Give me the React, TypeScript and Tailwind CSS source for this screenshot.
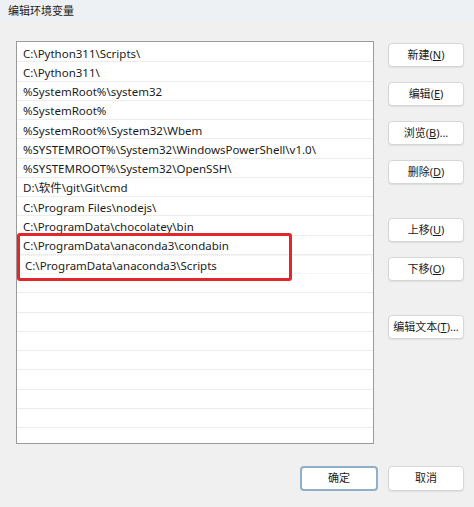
import React from "react";

const rows = [
  "C:\\Python311\\Scripts\\",
  "C:\\Python311\\",
  "%SystemRoot%\\system32",
  "%SystemRoot%",
  "%SystemRoot%\\System32\\Wbem",
  "%SYSTEMROOT%\\System32\\WindowsPowerShell\\v1.0\\",
  "%SYSTEMROOT%\\System32\\OpenSSH\\",
  "D:\\软件\\git\\Git\\cmd",
  "C:\\Program Files\\nodejs\\",
  "C:\\ProgramData\\chocolatey\\bin",
  "C:\\ProgramData\\anaconda3\\condabin",
  "C:\\ProgramData\\anaconda3\\Scripts",
];

const font = { fontFamily: '"Noto Sans", "Noto Sans CJK SC", sans-serif' };

function Btn({ label, k, tail = "", cls = "" }: { label: string; k?: string; tail?: string; cls?: string }) {
  return (
    <div
      className={`w-[76px] h-[24px] flex items-center justify-center bg-white border border-[#d6d6d6] rounded-[4px] shadow-[0_1px_1px_rgba(0,0,0,0.08)] text-[11px] text-[#1b1b1b] ${cls}`}
    >
      <span>
        {label}
        {k ? (
          <>
            (<span className="underline">{k}</span>)
          </>
        ) : null}
        {tail}
      </span>
    </div>
  );
}

export default function App() {
  const all = [...rows, ...Array(9).fill("")];
  return (
    <div className="relative w-[474px] h-[507px] bg-[#f0f0f0] overflow-hidden" style={font}>
      <div className="h-[22px] bg-[#eef1f4] px-[8px] flex items-center text-[11px] text-[#1b1b1b]">
        编辑环境变量
      </div>
      <div className="flex pl-[16px] pt-[19px]">
        <div className="relative w-[358px] h-[403px] bg-white border border-[#9a9a9a] overflow-hidden pt-[1px]">
          {all.map((r, i) => (
            <div
              key={i}
              className={`h-[19.25px] border-b border-[#ececec] flex items-center pt-[2px] pl-[6px] text-[11.5px] text-[#1b1b1b] whitespace-nowrap ${
                i === 11 ? "border border-dotted border-[#555] mx-[1px] pl-[5px]" : ""
              }`}
            >
              {r}
            </div>
          ))}
        </div>
        <div className="ml-[14px] pt-[2px] flex flex-col">
          <Btn label="新建" k="N" />
          <Btn label="编辑" k="E" cls="mt-[15px]" />
          <Btn label="浏览" k="B" tail="..." cls="mt-[15px]" />
          <Btn label="删除" k="D" cls="mt-[15px]" />
          <Btn label="上移" k="U" cls="mt-[34px]" />
          <Btn label="下移" k="O" cls="mt-[15px]" />
          <Btn label="编辑文本" k="T" tail="..." cls="mt-[34px]" />
        </div>
      </div>
      <div className="flex justify-end pr-[10px] mt-[22px] gap-[10px]">
        <div className="w-[78px] h-[25px] flex items-center justify-center bg-white border-2 border-[#8fb0c8] rounded-[4px] text-[11px] text-[#1b1b1b]">
          确定
        </div>
        <div className="w-[76px] h-[25px] flex items-center justify-center bg-white border border-[#d6d6d6] rounded-[4px] shadow-[0_1px_1px_rgba(0,0,0,0.08)] text-[11px] text-[#1b1b1b]">
          取消
        </div>
      </div>
      <div className="absolute left-[17px] top-[233px] w-[275px] h-[48px] border-[3px] border-[#e3262b] rounded-[3px]" />
    </div>
  );
}
